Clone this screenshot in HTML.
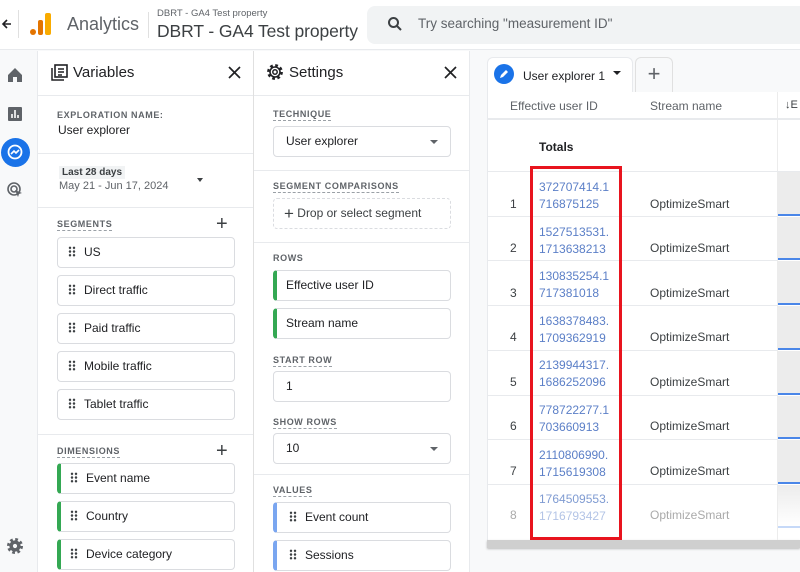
<!DOCTYPE html>
<html><head><meta charset="utf-8"><style>
*{box-sizing:border-box;margin:0;padding:0}
body{width:800px;height:572px;overflow:hidden;position:relative;background:#f8f9fa;font-family:"Liberation Sans",Arial,sans-serif;color:#202124}
.a{position:absolute}
.lbl{position:absolute;font-size:9px;font-weight:bold;letter-spacing:.6px;color:#5f6368;border-bottom:1px dashed #9aa0a6;padding-bottom:1px}
.item{position:absolute;height:31px;background:#fff;border:1px solid #dadce0;border-radius:4px;font-size:12px;line-height:29px;color:#202124}
.g{border-left:4px solid #34a853}
.b{border-left:4px solid #7aa6f0}
.dots{display:inline-block;width:8px;height:11px;vertical-align:-1px;margin-right:8px;background:radial-gradient(circle,#3c4043 1.1px,transparent 1.4px) 0 0/4px 3.7px}
.hline{position:absolute;height:1px;background:#e8eaed}
.id{position:absolute;left:539px;font-size:12px;line-height:17px;color:#5b7fc7}
.num{position:absolute;left:510px;font-size:12px;color:#3c4043}
.sn{position:absolute;left:650px;font-size:12px;color:#3c4043}
.bar{position:absolute;left:778px;width:22px;background:#ececec;border-bottom:2px solid #4a86e8}
</style></head><body>
<!-- top bar -->
<div class="a" style="left:0;top:0;width:800px;height:50px;background:#fff;border-bottom:1px solid #e8eaed"></div>
<svg class="a" style="left:0;top:16px" width="14" height="16"><path d="M11 8H3M7 4L3 8l4 4" stroke="#202124" stroke-width="1.6" fill="none"/></svg>
<div class="a" style="left:18px;top:10px;width:1px;height:28px;background:#e0e0e0"></div>
<div class="a" style="left:30px;top:29px;width:6px;height:6px;border-radius:3px;background:#e37400"></div>
<div class="a" style="left:38px;top:20px;width:5px;height:15px;border-radius:2px;background:#e37400"></div>
<div class="a" style="left:45px;top:13px;width:6px;height:22px;border-radius:2px;background:#f9ab00"></div>
<div class="a" style="left:67px;top:14px;font-size:18px;color:#5f6368">Analytics</div>
<div class="a" style="left:148px;top:12px;width:1px;height:26px;background:#e0e0e0"></div>
<div class="a" style="left:157px;top:8px;font-size:9.5px;color:#5f6368">DBRT - GA4 Test property</div>
<div class="a" style="left:157px;top:21px;font-size:17.5px;color:#3c4043;letter-spacing:-0.1px">DBRT - GA4 Test property</div>
<div class="a" style="left:367px;top:6px;width:440px;height:38px;background:#f1f3f4;border-radius:8px"></div>
<svg class="a" style="left:387px;top:16px" width="16" height="16"><circle cx="6.5" cy="6.5" r="4.5" stroke="#3c4043" stroke-width="2" fill="none"/><path d="M10 10l4 4" stroke="#3c4043" stroke-width="2"/></svg>
<div class="a" style="left:418px;top:16px;font-size:13.5px;color:#5f6368">Try searching "measurement ID"</div>
<!-- rail -->
<svg class="a" style="left:7px;top:67px" width="16" height="16"><path d="M1 8L8 1l7 7v7H10v-5H6v5H1z" fill="#5f6368"/></svg>
<svg class="a" style="left:8px;top:107px" width="14" height="14"><rect width="14" height="14" rx="1" fill="#5f6368"/><path d="M4 11V7M7 11V3M10 11V8" stroke="#fff" stroke-width="1.6"/></svg>
<div class="a" style="left:1px;top:138px;width:29px;height:29px;border-radius:50%;background:#1a73e8"></div>
<svg class="a" style="left:5px;top:142px" width="21" height="21"><circle cx="10" cy="10" r="6.5" stroke="#fff" stroke-width="1.8" fill="none"/><path d="M6 12l3-3 2 2 3-3" stroke="#fff" stroke-width="1.6" fill="none"/></svg>
<svg class="a" style="left:6px;top:181px" width="18" height="18"><circle cx="8" cy="8" r="6" stroke="#5f6368" stroke-width="1.6" fill="none"/><circle cx="8" cy="8" r="3" stroke="#5f6368" stroke-width="1.6" fill="none"/><path d="M9 9l7 3-3 1-1 3z" fill="#5f6368"/></svg>
<svg class="a" style="left:6px;top:537px" width="18" height="18"><circle cx="9" cy="9" r="6.3" fill="none" stroke="#5f6368" stroke-width="3.4" stroke-dasharray="2.6 2.35"/><circle cx="9" cy="9" r="5.6" fill="#5f6368"/><circle cx="9" cy="9" r="2.1" fill="#f8f9fa"/></svg>
<!-- variables -->
<div class="a" style="left:37px;top:51px;width:217px;height:521px;background:#fff;border-left:1px solid #e8eaed;border-right:1px solid #e0e0e0"></div>
<svg class="a" style="left:51px;top:64px" width="17" height="17"><rect x="4" y="1" width="12" height="12" fill="none" stroke="#202124" stroke-width="1.6"/><path d="M1 4v12h12M7 5h6M7 8h6M7 11h4" stroke="#202124" stroke-width="1.5" fill="none"/></svg>
<div class="a" style="left:73px;top:64px;font-size:15px">Variables</div>
<svg class="a" style="left:228px;top:66px" width="13" height="13"><path d="M1 1l11 11M12 1L1 12" stroke="#202124" stroke-width="1.7"/></svg>
<div class="hline" style="left:38px;top:95px;width:215px"></div>
<div class="a" style="left:57px;top:110px;font-size:9px;font-weight:bold;letter-spacing:.6px;color:#5f6368">EXPLORATION NAME:</div>
<div class="a" style="left:58px;top:123px;font-size:12px">User explorer</div>
<div class="hline" style="left:38px;top:153px;width:215px"></div>
<div class="a" style="left:59px;top:166px;font-size:10px;font-weight:bold;background:#f1f3f4;padding:1px 3px;color:#3c4043">Last 28 days</div>
<div class="a" style="left:59px;top:180px;font-size:11px;color:#5f6368">May 21 - Jun 17, 2024</div>
<div class="a" style="left:197px;top:178px;border:3px solid transparent;border-top:4px solid #3c4043"></div>
<div class="hline" style="left:38px;top:207px;width:215px"></div>
<div class="lbl" style="left:57px;top:219px">SEGMENTS</div>
<div class="a" style="left:216px;top:213px;font-size:20px;color:#3c4043">+</div>
<div class="item" style="left:57px;top:237px;width:178px;padding-left:10px"><span class="dots"></span>US</div>
<div class="item" style="left:57px;top:275px;width:178px;padding-left:10px"><span class="dots"></span>Direct traffic</div>
<div class="item" style="left:57px;top:313px;width:178px;padding-left:10px"><span class="dots"></span>Paid traffic</div>
<div class="item" style="left:57px;top:351px;width:178px;padding-left:10px"><span class="dots"></span>Mobile traffic</div>
<div class="item" style="left:57px;top:389px;width:178px;padding-left:10px"><span class="dots"></span>Tablet traffic</div>
<div class="hline" style="left:38px;top:434px;width:215px"></div>
<div class="lbl" style="left:57px;top:446px">DIMENSIONS</div>
<div class="a" style="left:216px;top:440px;font-size:20px;color:#3c4043">+</div>
<div class="item g" style="left:57px;top:463px;width:178px;padding-left:9px"><span class="dots"></span>Event name</div>
<div class="item g" style="left:57px;top:501px;width:178px;padding-left:9px"><span class="dots"></span>Country</div>
<div class="item g" style="left:57px;top:539px;width:178px;padding-left:9px"><span class="dots"></span>Device category</div>
<!-- settings -->
<div class="a" style="left:254px;top:51px;width:216px;height:521px;background:#fff;border-right:1px solid #e8eaed"></div>
<svg class="a" style="left:266px;top:63px" width="18" height="18"><circle cx="9" cy="9" r="6.3" fill="none" stroke="#202124" stroke-width="3.2" stroke-dasharray="2.6 2.35"/><circle cx="9" cy="9" r="5" fill="none" stroke="#202124" stroke-width="1.6"/><circle cx="9" cy="9" r="2.2" fill="none" stroke="#202124" stroke-width="1.5"/></svg>
<div class="a" style="left:289px;top:64px;font-size:15px">Settings</div>
<svg class="a" style="left:444px;top:66px" width="13" height="13"><path d="M1 1l11 11M12 1L1 12" stroke="#202124" stroke-width="1.7"/></svg>
<div class="hline" style="left:254px;top:95px;width:215px"></div>
<div class="lbl" style="left:273px;top:109px">TECHNIQUE</div>
<div class="item" style="left:273px;top:126px;width:178px;padding-left:12px">User explorer</div>
<div class="a" style="left:430px;top:140px;border:4px solid transparent;border-top:4px solid #5f6368"></div>
<div class="hline" style="left:254px;top:170px;width:215px"></div>
<div class="lbl" style="left:273px;top:181px">SEGMENT COMPARISONS</div>
<div class="a" style="left:273px;top:198px;width:178px;height:31px;border:1px dashed #dadce0;border-radius:4px;font-size:12px;line-height:29px;padding-left:10px;color:#3c4043"><span style="font-size:17px;vertical-align:-2px">+</span> Drop or select segment</div>
<div class="hline" style="left:254px;top:242px;width:215px"></div>
<div class="a" style="left:273px;top:253px;font-size:9px;font-weight:bold;letter-spacing:.6px;color:#5f6368">ROWS</div>
<div class="item g" style="left:273px;top:270px;width:178px;padding-left:9px">Effective user ID</div>
<div class="item g" style="left:273px;top:308px;width:178px;padding-left:9px">Stream name</div>
<div class="lbl" style="left:273px;top:355px">START ROW</div>
<div class="item" style="left:273px;top:371px;width:178px;padding-left:12px">1</div>
<div class="lbl" style="left:273px;top:417px">SHOW ROWS</div>
<div class="item" style="left:273px;top:433px;width:178px;padding-left:12px">10</div>
<div class="a" style="left:430px;top:447px;border:4px solid transparent;border-top:4px solid #5f6368"></div>
<div class="hline" style="left:254px;top:474px;width:215px"></div>
<div class="lbl" style="left:273px;top:485px">VALUES</div>
<div class="item b" style="left:273px;top:502px;width:178px;padding-left:12px"><span class="dots"></span>Event count</div>
<div class="item b" style="left:273px;top:540px;width:178px;padding-left:12px"><span class="dots"></span>Sessions</div>
<!-- right area -->
<div class="a" style="left:487px;top:57px;width:146px;height:36px;background:#fff;border:1px solid #e8eaed;border-bottom:none;border-radius:6px 6px 0 0"></div>
<div class="a" style="left:494px;top:64px;width:20px;height:20px;border-radius:50%;background:#1a73e8"></div>
<svg class="a" style="left:498px;top:68px" width="12" height="12"><path d="M2 10l1-3 5-5 2 2-5 5z" fill="#fff"/></svg>
<div class="a" style="left:523px;top:69px;font-size:12px;color:#202124">User explorer 1</div>
<div class="a" style="left:613px;top:71px;border:4px solid transparent;border-top:4px solid #202124"></div>
<div class="a" style="left:635px;top:57px;width:38px;height:35px;background:#f8f9fa;border:1px solid #e0e0e0;border-bottom:none;border-radius:6px 6px 0 0;text-align:center;font-size:22px;line-height:32px;color:#5f6368">+</div>
<div class="a" style="left:487px;top:92px;width:313px;height:448px;background:#fff;border-left:1px solid #e8eaed"></div>
<div class="a" style="left:487px;top:540px;width:313px;height:8px;background:#cfcfcf;box-shadow:0 1px 2px #bbb"></div>
<div class="a" style="left:510px;top:99px;font-size:12px;color:#5f6368">Effective user ID</div>
<div class="a" style="left:650px;top:99px;font-size:12px;color:#5f6368">Stream name</div>
<div class="a" style="left:777px;top:92px;width:1px;height:448px;background:#ececec"></div>
<div class="a" style="left:785px;top:99px;font-size:11px;color:#3c4043">↓E</div>
<div class="hline" style="left:487px;top:118px;width:313px;height:2px"></div>
<div class="a" style="left:539px;top:140px;font-size:12px;font-weight:bold;color:#202124">Totals</div>
<div class="hline" style="left:487px;top:171px;width:313px"></div>
<div class="bar" style="top:172px;height:44px"></div>
<div class="bar" style="top:217px;height:43px"></div>
<div class="bar" style="top:261px;height:44px"></div>
<div class="bar" style="top:306px;height:44px"></div>
<div class="bar" style="top:351px;height:44px"></div>
<div class="bar" style="top:396px;height:43px"></div>
<div class="bar" style="top:440px;height:44px"></div>
<div class="bar" style="top:485px;height:43px;background:linear-gradient(#ececec,#fff);border-bottom-color:#c6d9f8"></div>
<div class="hline" style="left:487px;top:216px;width:290px"></div>
<div class="hline" style="left:487px;top:260px;width:290px"></div>
<div class="hline" style="left:487px;top:305px;width:290px"></div>
<div class="hline" style="left:487px;top:350px;width:290px"></div>
<div class="hline" style="left:487px;top:395px;width:290px"></div>
<div class="hline" style="left:487px;top:439px;width:290px"></div>
<div class="hline" style="left:487px;top:484px;width:290px"></div>

<div class="id" style="top:179px">372707414.1<br>716875125</div><div class="num" style="top:197px">1</div><div class="sn" style="top:197px">OptimizeSmart</div>
<div class="id" style="top:224px">1527513531.<br>1713638213</div><div class="num" style="top:241px">2</div><div class="sn" style="top:241px">OptimizeSmart</div>
<div class="id" style="top:268px">130835254.1<br>717381018</div><div class="num" style="top:286px">3</div><div class="sn" style="top:286px">OptimizeSmart</div>
<div class="id" style="top:313px">1638378483.<br>1709362919</div><div class="num" style="top:330px">4</div><div class="sn" style="top:330px">OptimizeSmart</div>
<div class="id" style="top:357px">2139944317.<br>1686252096</div><div class="num" style="top:375px">5</div><div class="sn" style="top:375px">OptimizeSmart</div>
<div class="id" style="top:402px">778722277.1<br>703660913</div><div class="num" style="top:419px">6</div><div class="sn" style="top:419px">OptimizeSmart</div>
<div class="id" style="top:447px">2110806990.<br>1715619308</div><div class="num" style="top:464px">7</div><div class="sn" style="top:464px">OptimizeSmart</div>
<div class="id" style="top:491px;color:#7f9bd2">1764509553.<br><span style="color:#b3c4e6">1716793427</span></div><div class="num" style="top:508px;color:#aaa">8</div><div class="sn" style="top:508px;color:#aaa">OptimizeSmart</div>

<div class="a" style="left:530px;top:166px;width:92px;height:374px;border:3px solid #e8141e"></div>
</body></html>
